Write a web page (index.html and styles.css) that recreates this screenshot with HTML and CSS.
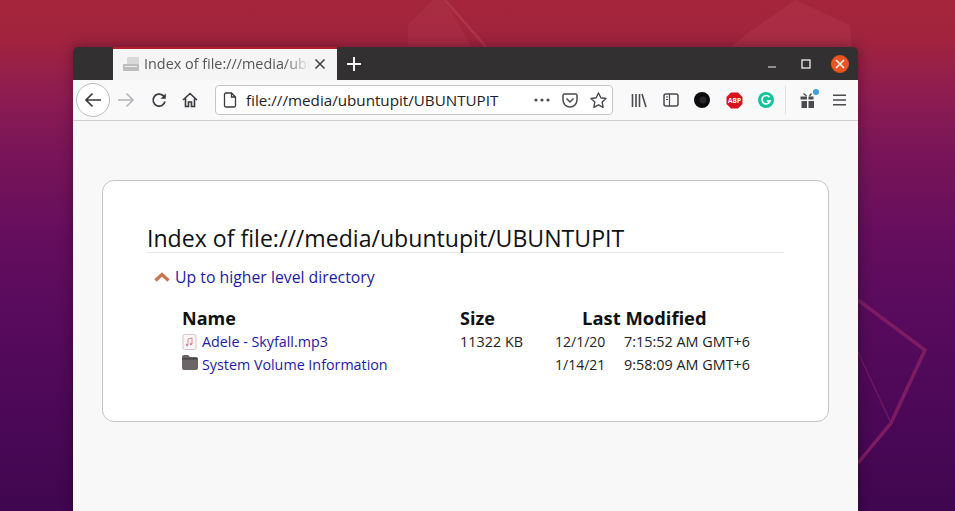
FILE: index.html
```html
<!DOCTYPE html>
<html lang="en">
<head>
    <meta charset="UTF-8">
    <meta name="viewport" content="width=device-width, initial-scale=1.0">
    <title>Index of file:///media/ubuntupit/UBUNTUPIT</title>
    <link rel="stylesheet" href="styles.css">
</head>
<body>
    <!-- wallpaper shapes -->
    <svg class="wallpaper" width="955" height="511" viewBox="0 0 955 511">
        <polygon points="408,48 408,25 433,0 445,0 472,48" fill="#b33a50" opacity="0.35"/>
        <line x1="445" y1="0" x2="487" y2="48" stroke="#c04a5c" stroke-width="2.500" opacity="0.45"/>
        <polygon points="730,48 745,35 795,0 850,25 852,48" fill="#b33a50" opacity="0.4"/>
        <polyline points="858,300 925,350 891,423 858,463" fill="none" stroke="#7d1c62" stroke-width="3.500"/>
        <line x1="858" y1="352" x2="891" y2="423" stroke="#6f1868" stroke-width="1.500"/>
    </svg>

    <div class="window">
        <div class="tabbar">
            <div class="tab">
                <svg class="tab-icon" width="18" height="16" viewBox="0 0 18 16">
                    <rect x="5" y="1" width="12" height="8" rx="1" fill="#d9d9d9"/>
                    <rect x="1" y="8" width="16" height="7" rx="1" fill="#bdbdbd"/>
                    <rect x="3" y="10" width="12" height="1" fill="#eee"/>
                </svg>
                <span class="tab-title">Index of file:///media/ubuntupit/UBUNTUPIT</span>
                <svg class="tab-close" width="12" height="12" viewBox="0 0 12 12">
                    <path d="M1.500 1.500l9 9M10.500 1.500l-9 9" stroke="#444" stroke-width="1.600"/>
                </svg>
            </div>
            <svg class="new-tab" width="14" height="14" viewBox="0 0 14 14">
                <path d="M7 0v14M0 7h14" stroke="#f4f4f4" stroke-width="2"/>
            </svg>
            <div class="win-controls">
                <svg width="10" height="10" viewBox="0 0 10 10"><path d="M1 8h8" stroke="#eee" stroke-width="1.200"/></svg>
                <svg width="10" height="10" viewBox="0 0 10 10"><rect x="1" y="1" width="8" height="8" fill="none" stroke="#eee" stroke-width="1.300"/></svg>
                <div class="win-close">
                    <svg width="10" height="10" viewBox="0 0 10 10"><path d="M1 1l8 8M9 1l-8 8" stroke="#fff" stroke-width="1.500"/></svg>
                </div>
            </div>
        </div>

        <div class="toolbar">
            <div class="back-btn">
                <svg width="18" height="16" viewBox="0 0 18 16"><path d="M17 8H2M8.500 1.500L2 8l6.500 6.500" fill="none" stroke="#38383d" stroke-width="1.700"/></svg>
            </div>
            <svg class="nav-forward" width="18" height="16" viewBox="0 0 18 16"><path d="M1 8h15M9.500 1.500L16 8l-6.500 6.500" fill="none" stroke="#b4b4b6" stroke-width="1.600"/></svg>
            <svg class="nav-reload" width="16" height="16" viewBox="0 0 16 16"><path d="M14 9.500A6 6 0 1 1 12 3.500L14 5.500" fill="none" stroke="#38383d" stroke-width="1.700"/><path d="M14.800 1.500v5.200H9.600z" fill="#38383d"/></svg>
            <svg class="nav-home" width="16" height="16" viewBox="0 0 16 16"><path d="M1 8l7-6.500L15 8M3.500 6.500V14.500H6.500V10H9.500V14.500H12.500V6.500" fill="none" stroke="#38383d" stroke-width="1.600"/></svg>

            <div class="urlbar">
                <svg width="14" height="16" viewBox="0 0 14 16"><path d="M1.500 2.500a1.500 1.500 0 0 1 1.500-1.500H8.500L12.500 5V13.500A1.500 1.500 0 0 1 11 15H3A1.500 1.500 0 0 1 1.500 13.500z M8.500 1V5H12.500" fill="none" stroke="#38383d" stroke-width="1.300"/></svg>
                <span class="url-text">file:///media/ubuntupit/UBUNTUPIT</span>
                <svg class="url-dots" width="16" height="4" viewBox="0 0 16 4"><circle cx="2" cy="2" r="1.600" fill="#4a4a4f"/><circle cx="8" cy="2" r="1.600" fill="#4a4a4f"/><circle cx="14" cy="2" r="1.600" fill="#4a4a4f"/></svg>
                <svg width="16" height="15" viewBox="0 0 16 15"><path d="M1 2.500A1.500 1.500 0 0 1 2.500 1h11A1.500 1.500 0 0 1 15 2.500V7A7 7 0 0 1 1 7z M4.500 5.500L8 9l3.500-3.500" fill="none" stroke="#4a4a4f" stroke-width="1.500"/></svg>
                <svg width="17" height="16" viewBox="0 0 17 16"><path d="M8.500 1l2.300 4.800 5.200.7-3.800 3.600.9 5.200-4.600-2.500-4.600 2.500.9-5.200L1 6.500l5.200-.7z" fill="none" stroke="#4a4a4f" stroke-width="1.400" stroke-linejoin="round"/></svg>
            </div>

            <div class="tools">
                <svg width="16" height="15" viewBox="0 0 16 15"><path d="M1.500 1v13M5 1v13M8.500 1v13M11 1l4 13" fill="none" stroke="#4a4a4f" stroke-width="1.600"/></svg>
                <svg width="16" height="14" viewBox="0 0 16 14"><rect x="1" y="1" width="14" height="12" rx="2" fill="none" stroke="#4a4a4f" stroke-width="1.500"/><path d="M6.500 1v12M3 4h2M3 6.500h2" stroke="#4a4a4f" stroke-width="1.200"/></svg>
                <svg width="16" height="16" viewBox="0 0 16 16"><circle cx="8" cy="8" r="8" fill="#0c0c0e"/><circle cx="9" cy="8" r="3.500" fill="#2b2627"/></svg>
                <svg width="17" height="17" viewBox="0 0 17 17"><polygon points="5,0.500 12,0.500 16.500,5 16.500,12 12,16.500 5,16.500 0.500,12 0.500,5" fill="#d8121f"/><text class="abp-text" x="8.500" y="11">ABP</text></svg>
                <svg width="16" height="16" viewBox="0 0 16 16"><circle cx="8" cy="8" r="8" fill="#15c39a"/><path d="M11.500 5.200A4.200 4.200 0 1 0 12.200 8.800H8.800" fill="none" stroke="#fff" stroke-width="1.700"/></svg>
            </div>
            <div class="tool-sep"></div>
            <div class="gift">
                <svg width="16" height="16" viewBox="0 0 16 16"><path d="M0.500 3.500h6.500v3h-6.500zM8.500 3.500h5v3h-5zM1.500 8h5.500v7h-5.500zM8.500 8h5.500v7h-5.500z" fill="#4a4a4f"/><path d="M3.500 0.500l3 2.500M9.500 3l2-2.500" stroke="#4a4a4f" stroke-width="1.300"/></svg>
                <span class="gift-dot"></span>
            </div>
            <svg class="menu-icon" width="13" height="12" viewBox="0 0 13 12"><path d="M0 1.200h13M0 6h13M0 10.800h13" stroke="#4a4a4f" stroke-width="1.500"/></svg>
        </div>

        <div class="page">
            <div class="card">
                <h1 class="dir-title">Index of file:///media/ubuntupit/UBUNTUPIT</h1>
                <p class="up-row">
                    <svg width="16" height="11" viewBox="0 0 16 11"><path d="M1.500 8.500L8 2.500l6.500 6" fill="none" stroke="#c9764e" stroke-width="3.200"/></svg>
                    <a href="#" class="dir-link">Up to higher level directory</a>
                </p>
                <div class="listing">
                    <div class="head name-col">Name</div>
                    <div class="head size-col">Size</div>
                    <div class="head modified-col">Last Modified</div>

                    <div class="name-col file-name">
                        <svg class="note" width="15" height="16" viewBox="0 0 15 16"><rect x="1" y="0.500" width="13" height="15" rx="1.500" fill="#fbf5f6" stroke="#d9c3c8"/><path d="M6 11V5l4-1v6" fill="none" stroke="#d58a9c"/><circle cx="5" cy="11" r="1.200" fill="#d58a9c"/><circle cx="9" cy="10" r="1.200" fill="#d58a9c"/></svg>
                        <a href="#" class="dir-link">Adele - Skyfall.mp3</a>
                    </div>
                    <div class="size-col">11322 KB</div>
                    <div class="date-col">12/1/20</div>
                    <div class="time-col">7:15:52 AM GMT+6</div>

                    <div class="name-col file-name">
                        <svg class="folder" width="16" height="15" viewBox="0 0 16 15"><path d="M0 2a2 2 0 0 1 2-2h4l2 2h6a2 2 0 0 1 2 2v9a2 2 0 0 1-2 2H2a2 2 0 0 1-2-2z" fill="#6b6567"/><rect x="0.500" y="3" width="15" height="1.500" fill="#454143"/></svg>
                        <a href="#" class="dir-link">System Volume Information</a>
                    </div>
                    <div class="size-col"></div>
                    <div class="date-col">1/14/21</div>
                    <div class="time-col">9:58:09 AM GMT+6</div>
                </div>
            </div>
        </div>
    </div>
</body>
</html>
```

FILE: styles.css
```css
html, body {
    height: 100%;
}
body {
    margin: 0;
    overflow: hidden;
    position: relative;
    font-family: "Open Sans", "Noto Sans", sans-serif;
    background: linear-gradient(180deg, #a5253b 0, #a1233e 40px, #8f1d50 90px, #7a1558 150px, #640d5e 240px, #560a5c 330px, #400650 511px);
}
.wallpaper {
    position: absolute;
    left: 0;
    top: 0;
}
.window {
    position: absolute;
    left: 73px;
    top: 47px;
    width: 785px;
    height: 464px;
    display: flex;
    flex-direction: column;
    border-radius: 5px 5px 0 0;
    overflow: hidden;
    box-shadow: 0 0 14px rgba(0,0,0,0.35);
}

/* tab strip */
.tabbar {
    height: 33px;
    flex: none;
    display: flex;
    align-items: center;
    background: #333031;
    padding-left: 40px;
}
.tab {
    width: 224px;
    height: 33px;
    box-sizing: border-box;
    display: flex;
    align-items: center;
    background: #f5f5f5;
    border-top: 2px solid #b3202c;
    padding: 0 11px 2px 9px;
}
.tab-icon {
    flex: none;
}
.tab-title {
    margin-left: 4px;
    margin-right: 4px;
    flex: 1;
    overflow: hidden;
    white-space: nowrap;
    font-size: 14.4px;
    color: #555;
    -webkit-mask-image: linear-gradient(90deg, #000 140px, transparent 100%);
    mask-image: linear-gradient(90deg, #000 140px, transparent 100%);
}
.tab-close {
    flex: none;
}
.new-tab {
    margin-left: 10px;
}
.win-controls {
    margin-left: auto;
    margin-right: 9px;
    display: flex;
    align-items: center;
}
.win-controls svg {
    display: block;
}
.win-close {
    width: 18px;
    height: 18px;
    margin-left: 20px;
    border-radius: 50%;
    background: #e95420;
    display: flex;
    align-items: center;
    justify-content: center;
}
.win-controls > svg + svg {
    margin-left: 24px;
}

/* nav toolbar */
.toolbar {
    height: 40px;
    flex: none;
    box-sizing: content-box;
    display: flex;
    align-items: center;
    background: #f9f9fa;
    border-bottom: 1px solid #cfcfd1;
    padding-left: 3px;
}
.back-btn {
    width: 32px;
    height: 32px;
    border: 1px solid #bdbdbf;
    border-radius: 50%;
    background: #fff;
    display: flex;
    align-items: center;
    justify-content: center;
}
.nav-forward {
    margin-left: 7px;
}
.nav-reload {
    margin-left: 16px;
}
.nav-home {
    margin-left: 15px;
}
.urlbar {
    width: 398px;
    height: 30px;
    box-sizing: border-box;
    margin-left: 17px;
    display: flex;
    align-items: center;
    background: #fff;
    border: 1px solid #c6c6c8;
    border-radius: 4px;
    padding: 0 5px 0 7px;
}
.url-text {
    margin-left: 9px;
    flex: 1;
    font-size: 15.2px;
    color: #222;
    white-space: nowrap;
}
.url-dots {
    margin-right: 12px;
}
.urlbar svg:last-child {
    margin-left: 12px;
}
.tools {
    margin-left: 18px;
    display: flex;
    align-items: center;
    gap: 15.5px;
}
.abp-text {
    font-size: 6.500px;
    font-weight: 700;
    fill: #fff;
    text-anchor: middle;
}
.tool-sep {
    width: 1px;
    height: 28px;
    margin-left: 11px;
    background: #e2e2e3;
}
.gift {
    position: relative;
    margin-left: 14px;
    height: 16px;
}
.gift-dot {
    position: absolute;
    right: -3px;
    top: -3px;
    width: 6px;
    height: 6px;
    border-radius: 50%;
    background: #3b9fe0;
}
.menu-icon {
    margin-left: 17px;
}

/* directory listing */
.page {
    flex: 1;
    background: #f8f8f8;
    padding: 59px 29px 0;
}
.card {
    height: 242px;
    box-sizing: border-box;
    background: #fff;
    border: 1px solid #c4c4c4;
    border-radius: 12px;
    padding: 43px 44px 0;
}
.dir-title {
    margin: 0;
    font-size: 23.1px;
    line-height: 28px;
    font-weight: 400;
    color: #111;
    border-bottom: 1px solid #e4e4e4;
    padding-bottom: 0;
}
.up-row {
    margin: 12px 0 0 7px;
    display: flex;
    align-items: center;
    gap: 5px;
    line-height: 24px;
}
.dir-link {
    font-size: 15.8px;
    color: #1d1aa8;
    text-decoration: none;
}
.listing {
    display: grid;
    grid-template-columns: 278px 95px 69px auto;
    margin: 17px 0 0 35px;
    font-size: 14.4px;
    color: #222;
    line-height: 23px;
    justify-content: start;
}
.head {
    font-size: 18px;
    font-weight: 700;
    color: #111;
    line-height: 24px;
}
.modified-col {
    grid-column: 3 / 5;
    margin-left: 27px;
    font-size: 18.4px;
}
.date-col {
    font-size: 14px;
}
.file-name {
    display: flex;
    align-items: center;
}
.file-name .dir-link {
    font-size: 14.3px;
}
.note {
    margin-right: 5px;
}
.folder {
    margin-top: -5px;
    margin-right: 4px;
}
```
